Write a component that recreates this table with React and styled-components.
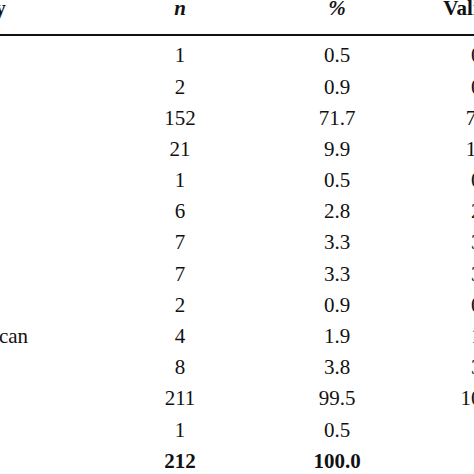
import React from "react";
import styled, { createGlobalStyle } from "styled-components";

const GlobalStyle = createGlobalStyle`
  html, body {
    margin: 0;
    padding: 0;
    background: #ffffff;
    overflow: hidden;
  }
`;

// the screenshot is a crop of a wider table, so the table starts left of the page
const Crop = styled.div`
  width: 474px;
  height: 474px;
  overflow: hidden;
  background: #ffffff;
`;

const Table = styled.div`
  margin-left: -81px;
  margin-top: -6.7px;
  display: grid;
  grid-template-columns: 191px 140px 174px 112px;
  font-family: "Liberation Serif", "Times New Roman", serif;
  font-size: 21px;
  line-height: 31.2px;
  color: #111111;
  width: 617px;
`;

const HeadCell = styled.div`
  font-weight: 700;
  font-style: ${(p) => (p.$italic ? "italic" : "normal")};
  text-align: ${(p) => (p.$left ? "left" : "center")};
  padding-left: ${(p) => (p.$left ? 4 : 0)}px;
  white-space: nowrap;
  padding-bottom: 9.5px;
  border-bottom: 2.5px solid #111111;
  margin-bottom: 4.3px;
`;

const Cell = styled.div`
  text-align: ${(p) => (p.$left ? "left" : "center")};
  font-weight: ${(p) => (p.$bold ? 700 : 400)};
  padding-left: ${(p) => p.$indent || 0}px;
  white-space: nowrap;
  height: 31.2px;
`;

const rows = [
  ["", "1", "0.5", "0.5"],
  ["", "2", "0.9", "0.9"],
  ["", "152", "71.7", "72.0"],
  ["", "21", "9.9", "10.0"],
  ["", "1", "0.5", "0.5"],
  ["", "6", "2.8", "2.8"],
  ["", "7", "3.3", "3.3"],
  ["", "7", "3.3", "3.3"],
  ["", "2", "0.9", "0.9"],
  ["Puerto Rican", "4", "1.9", "1.9"],
  ["", "8", "3.8", "3.8"],
  ["", "211", "99.5", "100.0"],
  ["", "1", "0.5", ""],
  ["", "212", "100.0", "", true],
];

export default function App() {
  return (
    <Crop>
      <GlobalStyle />
      <Table>
        <HeadCell $left>Category</HeadCell>
        <HeadCell $italic>n</HeadCell>
        <HeadCell $italic>%</HeadCell>
        <HeadCell>Valid %</HeadCell>

        {rows.map(([label, n, pct, valid, total], i) => (
          <React.Fragment key={i}>
            <Cell $left>{label}</Cell>
            <Cell $bold={total}>{n}</Cell>
            <Cell $bold={total}>{pct}</Cell>
            <Cell $bold={total} $indent={8}>{valid}</Cell>
          </React.Fragment>
        ))}
      </Table>
    </Crop>
  );
}
